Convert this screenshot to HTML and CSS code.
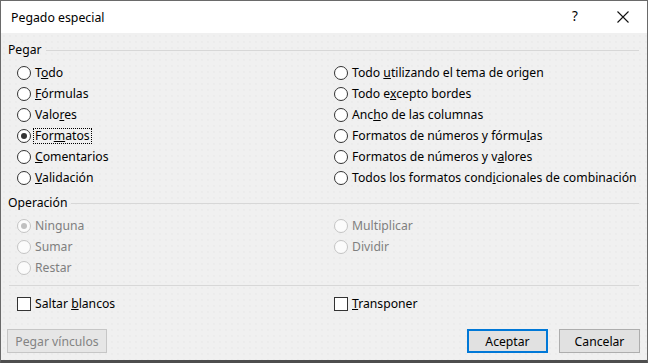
FILE: index.html
```html
<!DOCTYPE html>
<html lang="es">
<head>
<meta charset="utf-8">
<title>Pegado especial</title>
<link rel="stylesheet" href="styles.css">
</head>
<body>
<div class="window">
  <div class="titlebar">
    <span class="title">Pegado especial</span>
    <span class="help">?</span>
    <span class="close">
      <svg width="12" height="12" viewBox="0 0 12 12"><path d="M0.5 0.5 L11.5 11.5 M11.5 0.5 L0.5 11.5" stroke="#111" stroke-width="1.1" fill="none"/></svg>
    </span>
  </div>
  <div class="client">
    <div class="group-head"><span>Pegar</span><span class="rule"></span></div>
    <div class="options">
      <div class="opt"><span class="radio"></span><span>T<u>o</u>do</span></div>
      <div class="opt"><span class="radio"></span><span>Todo <u>u</u>tilizando el tema de origen</span></div>
      <div class="opt"><span class="radio"></span><span><u>F</u>órmulas</span></div>
      <div class="opt"><span class="radio"></span><span>Todo e<u>x</u>cepto bordes</span></div>
      <div class="opt"><span class="radio"></span><span>Valo<u>r</u>es</span></div>
      <div class="opt"><span class="radio"></span><span>Anc<u>h</u>o de las columnas</span></div>
      <div class="opt"><span class="radio checked"></span><span class="focus">For<u>m</u>atos</span></div>
      <div class="opt"><span class="radio"></span><span>Formatos de números y fórmu<u>l</u>as</span></div>
      <div class="opt"><span class="radio"></span><span><u>C</u>omentarios</span></div>
      <div class="opt"><span class="radio"></span><span>Formatos de números y v<u>a</u>lores</span></div>
      <div class="opt"><span class="radio"></span><span><u>V</u>alidación</span></div>
      <div class="opt"><span class="radio"></span><span>Todos los formatos cond<u>i</u>cionales de combinación</span></div>
    </div>
    <div class="group-head op"><span>Operación</span><span class="rule"></span></div>
    <div class="options disabled">
      <div class="opt"><span class="radio checked"></span><span>Ninguna</span></div>
      <div class="opt"><span class="radio"></span><span>Multiplicar</span></div>
      <div class="opt"><span class="radio"></span><span>Sumar</span></div>
      <div class="opt"><span class="radio"></span><span>Dividir</span></div>
      <div class="opt"><span class="radio"></span><span>Restar</span></div>
    </div>
    <div class="separator"></div>
    <div class="options checks">
      <div class="opt"><span class="check"></span><span>Saltar <u>b</u>lancos</span></div>
      <div class="opt"><span class="check"></span><span><u>T</u>ransponer</span></div>
    </div>
    <div class="buttons">
      <button class="btn btn-disabled" disabled>Pegar vínculos</button>
      <span class="spacer"></span>
      <button class="btn btn-default">Aceptar</button>
      <button class="btn">Cancelar</button>
    </div>
  </div>
</div>
</body>
</html>
```

FILE: styles.css
```css
html, body {
  margin: 0;
  padding: 0;
}
body {
  width: 648px;
  height: 363px;
  background: #f7f7f7;
  font-family: "Noto Sans", "Open Sans", sans-serif;
  font-size: 12.2px;
  color: #000;
  overflow: hidden;
}
.window {
  width: 646px;
  height: 359px;
  border: 1px solid #6a6a6a;
  border-bottom: 4px solid #4e4e4e;
  display: flex;
  flex-direction: column;
  background: #fff;
}
.titlebar {
  height: 32px;
  display: flex;
  align-items: center;
  background: #fff;
  flex: none;
}
.title {
  font-size: 12.3px;
  padding-left: 10px;
  flex: 1;
}
.help {
  font-size: 13.5px;
  width: 46px;
  text-align: center;
  margin-top: -2px;
  margin-right: 2px;
}
.close {
  width: 46px;
  display: flex;
  justify-content: center;
  margin-right: 1px;
}
.client {
  flex: 1;
  background-color: #f0f0f0;
  background-image: radial-gradient(circle, #e6e6e6 0.6px, transparent 0.8px);
  background-size: 6px 6px;
  padding: 9px 7px 0 7px;
  display: flex;
  flex-direction: column;
}
.group-head {
  display: flex;
  align-items: center;
  height: 16px;
  line-height: 16px;
}
.group-head .rule {
  flex: 1;
  height: 1px;
  background: #d7d7d7;
  margin-left: 4px;
  margin-right: 1px;
}
.group-head.op {
  margin-top: 7px;
}
.options {
  display: grid;
  grid-template-columns: 317px 1fr;
  padding-left: 9px;
  margin-top: 4px;
}
.opt {
  height: 21px;
  display: flex;
  align-items: center;
  gap: 4px;
  white-space: nowrap;
}
.radio {
  width: 12px;
  height: 12px;
  border: 1px solid #333;
  border-radius: 50%;
  background: #fff;
  flex: none;
  display: flex;
  align-items: center;
  justify-content: center;
}
.radio.checked::after {
  content: "";
  width: 6px;
  height: 6px;
  border-radius: 50%;
  background: #333;
}
.focus {
  outline: 1px dotted #000;
  outline-offset: 0;
  padding: 0 1px;
  margin-left: -1px;
  line-height: 14px;
}
.disabled .opt {
  color: #7f7f7f;
}
.disabled .radio {
  border-color: #c4c4c4;
  background: #fbfbfb;
}
.disabled .radio.checked::after {
  background: #c0c0c0;
}
.separator {
  height: 1px;
  background: #d7d7d7;
  margin: 7px 1px 0 1px;
}
.checks {
  margin-top: 7px;
}
.check {
  width: 12px;
  height: 12px;
  border: 1px solid #333;
  background: #fff;
  flex: none;
}
.buttons {
  display: flex;
  align-items: center;
  gap: 11px;
  margin-top: 15px;
}
.spacer {
  flex: 1;
}
.btn {
  font-family: inherit;
  font-size: 12.2px;
  height: 24px;
  width: 81px;
  padding: 0;
  background: #e1e1e1;
  border: 1px solid #adadad;
  color: #000;
  border-radius: 0;
}
.btn-default {
  border: 2px solid #0078d7;
}
.btn-disabled {
  width: 100px;
  margin-left: -1px;
  background: #e6e6e6;
  border-color: #c6c6c6;
  color: #838383;
}
```
